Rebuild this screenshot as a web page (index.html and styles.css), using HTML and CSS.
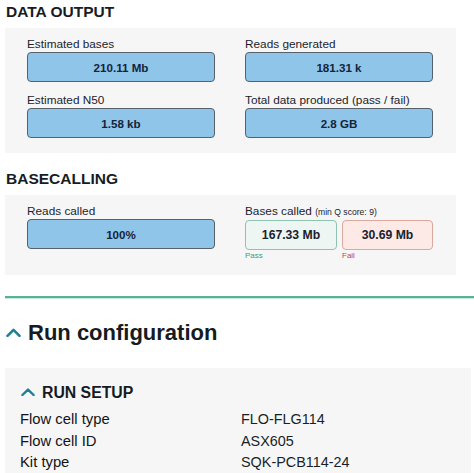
FILE: index.html
```html
<!DOCTYPE html>
<html>
<head>
<meta charset="utf-8">
<link rel="stylesheet" href="styles.css">
</head>
<body>
<div class="page">
  <h2 class="section-title first">DATA OUTPUT</h2>
  <div class="panel">
    <div class="grid">
      <div class="field">
        <div class="label">Estimated bases</div>
        <div class="box blue">210.11 Mb</div>
      </div>
      <div class="field">
        <div class="label">Reads generated</div>
        <div class="box blue">181.31 k</div>
      </div>
      <div class="field">
        <div class="label">Estimated N50</div>
        <div class="box blue">1.58 kb</div>
      </div>
      <div class="field">
        <div class="label">Total data produced (pass / fail)</div>
        <div class="box blue">2.8 GB</div>
      </div>
    </div>
  </div>

  <h2 class="section-title">BASECALLING</h2>
  <div class="panel panel-b">
    <div class="grid">
      <div class="field">
        <div class="label">Reads called</div>
        <div class="box blue">100%</div>
      </div>
      <div class="field">
        <div class="label">Bases called <span class="small">(min Q score: 9)</span></div>
        <div class="pf">
          <div class="pf-col">
            <div class="box pass">167.33 Mb</div>
            <div class="pf-label pass-text">Pass</div>
          </div>
          <div class="pf-col">
            <div class="box fail">30.69 Mb</div>
            <div class="pf-label fail-text">Fail</div>
          </div>
        </div>
      </div>
    </div>
  </div>

  <div class="divider"></div>

  <h1 class="config-title">
    <svg class="caret-big" width="15" height="9" viewBox="0 0 15 9"><path d="M1.5 7.8 L7.5 1.8 L13.5 7.8" fill="none" stroke="#1f7f95" stroke-width="2.6" stroke-linecap="round" stroke-linejoin="round"/></svg>
    <span>Run configuration</span>
  </h1>

  <div class="panel setup">
    <h3 class="setup-title">
      <svg class="caret-small" width="14" height="8" viewBox="0 0 14 8"><path d="M1.4 7 L7 1.6 L12.6 7" fill="none" stroke="#1f7f95" stroke-width="2.4" stroke-linecap="round" stroke-linejoin="round"/></svg>
      <span>RUN SETUP</span>
    </h3>
    <div class="rows">
      <div class="k">Flow cell type</div><div class="v">FLO-FLG114</div>
      <div class="k">Flow cell ID</div><div class="v">ASX605</div>
      <div class="k">Kit type</div><div class="v">SQK-PCB114-24</div>
    </div>
  </div>
</div>
</body>
</html>
```

FILE: styles.css
```css
html, body {
  margin: 0;
  padding: 0;
  background: #ffffff;
}
body {
  font-family: "Liberation Sans", Arial, Helvetica, sans-serif;
  color: #16202a;
  overflow: hidden;
}
.page {
  padding-left: 5px;
}
.section-title {
  margin: 16px 0 6px 1px;
  font-size: 15.5px;
  line-height: 20px;
  font-weight: 700;
  color: #161c22;
}
.section-title.first {
  margin-top: 2px;
}
.panel {
  background: #f6f6f7;
  width: 451px;
  box-sizing: border-box;
  padding: 9px 23px 15px 22px;
}
.panel-b {
  padding-bottom: 14px;
}
.grid {
  display: grid;
  grid-template-columns: 188px 188px;
  column-gap: 30px;
  row-gap: 11px;
}
.label {
  font-size: 11.8px;
  line-height: 15px;
  color: #1c232b;
  white-space: nowrap;
}
.small {
  font-size: 8.6px;
}
.box {
  height: 30px;
  box-sizing: border-box;
  border-radius: 4px;
  display: flex;
  align-items: center;
  justify-content: center;
  font-weight: 700;
  font-size: 11.6px;
  color: #14243a;
}
.blue {
  background: #8fc5e8;
  border: 1px solid #56616c;
}
.pf {
  display: grid;
  grid-template-columns: 92px 91px;
  column-gap: 5px;
}
.pass {
  background: #eef6f3;
  border: 1px solid #90c2b1;
  font-size: 12.2px;
  color: #18222c;
}
.fail {
  background: #fde9e5;
  border: 1px solid #dba89e;
  font-size: 12.2px;
  color: #18222c;
}
.pf-label {
  font-size: 8px;
  line-height: 11px;
}
.pass-text {
  color: #3f9c6f;
}
.fail-text {
  color: #c2453f;
}
.divider {
  margin-top: 21px;
  height: 2px;
  background: #57b393;
  box-shadow: 0 1px 0 #c7e8dc;
}
.config-title {
  margin: 21px 0 21px 0;
  display: flex;
  align-items: center;
  font-size: 22px;
  line-height: 28px;
  font-weight: 700;
  color: #151b21;
}
.caret-big {
  margin-left: 1px;
  margin-right: 7px;
  margin-top: -2px;
}
.setup {
  width: 466px;
  padding: 15px 15px 20px 15px;
  height: 120px;
}
.setup-title {
  margin: 0 0 6px 0;
  display: flex;
  align-items: center;
  font-size: 15.8px;
  line-height: 20px;
  font-weight: 700;
  color: #151b21;
}
.caret-small {
  margin-left: 1px;
  margin-right: 7px;
  margin-top: -3px;
}
.rows {
  display: grid;
  grid-template-columns: 221px 1fr;
}
.k {
  font-size: 14.8px;
  line-height: 21.5px;
  color: #111418;
}
.v {
  font-size: 14.4px;
  line-height: 21.5px;
  color: #1a1f24;
}
```
